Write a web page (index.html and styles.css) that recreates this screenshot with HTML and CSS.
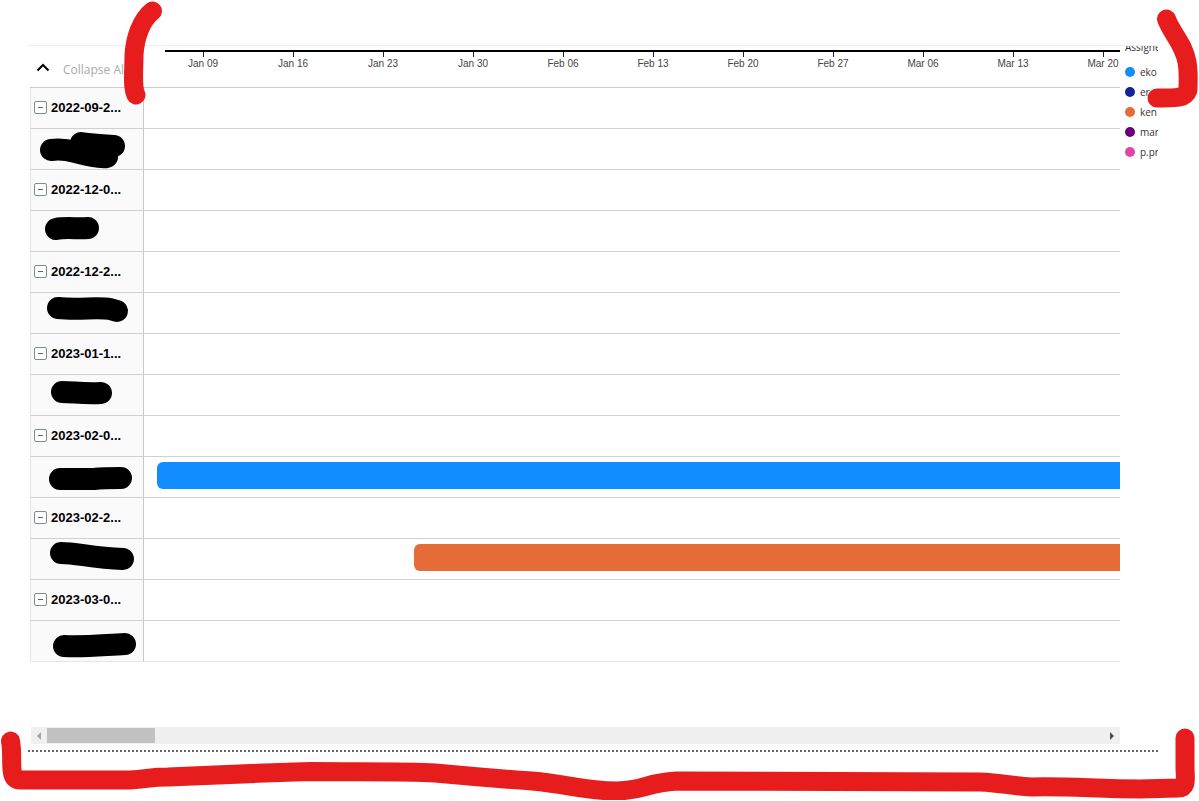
FILE: index.html
```html
<!DOCTYPE html>
<html lang="en">
    <head>
        <meta charset="utf-8">
        <title>Timeline</title>
        <link rel="stylesheet" href="styles.css">
    </head>
    <body>
        <main class="report">
            <div class="visual">
                <div class="chart">
                    <!-- Toolbar and time axis -->
                    <div class="chart-header">
                        <button class="collapse-all" type="button">
                            <svg class="chevron" viewBox="0 0 14 9"><path d="M1.5 7.5 L7 2 L12.5 7.5"/></svg>
                            <span>Collapse All</span>
                        </button>
                        <div class="axis">
                            <div class="axis-line"></div>
                            <ul class="ticks">
                                <li>Jan 09</li>
                                <li>Jan 16</li>
                                <li>Jan 23</li>
                                <li>Jan 30</li>
                                <li>Feb 06</li>
                                <li>Feb 13</li>
                                <li>Feb 20</li>
                                <li>Feb 27</li>
                                <li>Mar 06</li>
                                <li>Mar 13</li>
                                <li>Mar 20</li>
                            </ul>
                        </div>
                    </div>

                    <!-- Task rows -->
                    <table class="tasks">
                        <tr><th scope="row"><div class="group"><button class="toggle" type="button" aria-label="Collapse"></button>2022-09-2...</div></th><td></td></tr>
                        <tr><th></th><td></td></tr>
                        <tr><th scope="row"><div class="group"><button class="toggle" type="button" aria-label="Collapse"></button>2022-12-0...</div></th><td></td></tr>
                        <tr><th></th><td></td></tr>
                        <tr><th scope="row"><div class="group"><button class="toggle" type="button" aria-label="Collapse"></button>2022-12-2...</div></th><td></td></tr>
                        <tr><th></th><td></td></tr>
                        <tr><th scope="row"><div class="group"><button class="toggle" type="button" aria-label="Collapse"></button>2023-01-1...</div></th><td></td></tr>
                        <tr><th></th><td></td></tr>
                        <tr><th scope="row"><div class="group"><button class="toggle" type="button" aria-label="Collapse"></button>2023-02-0...</div></th><td></td></tr>
                        <tr><th></th><td><div class="bar bar-blue" style="margin-left: 13px"></div></td></tr>
                        <tr><th scope="row"><div class="group"><button class="toggle" type="button" aria-label="Collapse"></button>2023-02-2...</div></th><td></td></tr>
                        <tr><th></th><td><div class="bar bar-orange" style="margin-left: 270px"></div></td></tr>
                        <tr><th scope="row"><div class="group"><button class="toggle" type="button" aria-label="Collapse"></button>2023-03-0...</div></th><td></td></tr>
                        <tr><th></th><td></td></tr>
                    </table>

                    <div class="scrollbar">
                        <button class="scroll-arrow" type="button" aria-label="Scroll left"><svg viewBox="0 0 4 8"><path d="M4 0 V8 L0 4 Z" fill="#a3a3a3"/></svg></button>
                        <div class="scroll-thumb"></div>
                        <button class="scroll-arrow scroll-right" type="button" aria-label="Scroll right"><svg viewBox="0 0 4 8"><path d="M0 0 V8 L4 4 Z" fill="#505050"/></svg></button>
                    </div>
                </div>

                <div class="legend">
                    <div class="legend-title">Assigne</div>
                    <ul>
                        <li><i class="dot blue"></i>eko</li>
                        <li><i class="dot navy"></i>er</li>
                        <li><i class="dot orange"></i>ken</li>
                        <li><i class="dot purple"></i>mar</li>
                        <li><i class="dot pink"></i>p.pr</li>
                    </ul>
                </div>
            </div>
            <div class="dotted-rule"></div>
        </main>

        <!-- Pen marks over the report -->
        <svg class="marks" width="1199" height="801" viewBox="0 0 1199 801">
            <g class="pen-black">
                <path d="M51 150 C60 149 68 150 75 152 C86 155 98 158 107 157 M81 143 C92 145 103 145 114 146 M82 146 L106 155"/>
                <path d="M56 229 C66 227 78 229 88 228"/>
                <path d="M58 308 C78 310 98 307 110 309 L117 311"/>
                <path d="M62 392 C73 392 84 394 101 393"/>
                <path d="M60 479 L94 479 C103 478 112 478 121 478"/>
                <path d="M61 553 C77 553 92 558 123 559"/>
                <path d="M64 646 C86 647 103 645 125 644"/>
            </g>
            <g class="pen-red">
                <path d="M152.500 11 C141 20 135 38 134 55 C134 72 132 87 136 95"/>
                <path d="M1166.500 19 C1172 34 1184 44 1187 62 C1189 73 1188 82 1188 90 C1185 99 1174 98 1157 98"/>
                <path d="M10.500 741 C14 759 7 781 21 780 L130 780 C148 779 150 777 168 777 C212 775 263 773 310 771.500 C358 772 407 771 435 773 C477 777 502 779 532 781 C568 784 583 791 617 791 C647 790 644 783 677 781 L980 782 C1003 783 1012 786 1032 787 C1067 786 1099 789 1140 789 L1178 788 C1188 788 1185 778 1185 767 V738"/>
            </g>
        </svg>
    </body>
</html>
```

FILE: styles.css
```css
* { box-sizing: border-box; }
body { margin: 0; background: #fff; color: #000; font-family: "Liberation Sans", Arial, sans-serif; position: relative; overflow: hidden; }
ul { list-style: none; margin: 0; padding: 0; }
button { border: 0; padding: 0; background: none; font: inherit; color: inherit; }

.report { padding: 45px 41px 48px 28px; }
.visual { display: flex; border-top: 1px solid #eee; overflow: hidden; }
.chart { flex: 1; min-width: 0; padding-left: 2px; }

/* Header */
.chart-header { display: flex; height: 41px; }
.collapse-all {
    display: flex;
    align-items: center;
    flex: none;
    gap: 13px;
    width: 114px;
    padding: 5px 0 0 6px;
    font-family: "Open Sans", "Noto Sans", sans-serif;
    font-size: 12px;
    color: #aaa;
    white-space: nowrap;
}
.chevron { width: 14px; height: 9px; margin-bottom: 3px; fill: none; stroke: #000; stroke-width: 2; }
.axis { flex: 1; min-width: 0; padding-top: 4px; overflow: hidden; }
.axis-line { height: 2px; margin-left: 21px; background: #000; }
.ticks { display: flex; margin-left: 14px; font-size: 10px; line-height: 12px; color: #444; }
.ticks li { flex: none; width: 90px; text-align: center; }
.ticks li::before { content: ""; display: block; width: 1px; height: 5px; margin: 0 auto 1px; background: #222; }

/* Rows */
.tasks { width: 100%; table-layout: fixed; border-collapse: separate; border-spacing: 0; border-top: 1px solid #ccc; }
.tasks th, .tasks td { height: 41px; padding: 0; border-bottom: 1px solid #d0d0d0; }
.tasks th { width: 114px; padding-bottom: 2px; background: #fafafa; border-left: 1px solid #e6e6e6; border-right: 1px solid #c8c8c8; }
.tasks td { padding-bottom: 3px; }
.tasks tr:last-child th, .tasks tr:last-child td { border-bottom-color: #e6e6e6; }
.group { display: flex; align-items: center; gap: 4px; padding-left: 3px; font-size: 13px; font-weight: bold; white-space: nowrap; }
.toggle { display: flex; align-items: center; justify-content: center; width: 13px; height: 13px; border: 1px solid #7f8c8d; border-radius: 2px; background: #fff; }
.toggle::before { content: ""; width: 5px; height: 1px; background: #666; }
.bar { height: 27px; border-radius: 6px 0 0 6px; }
.bar-blue { background: #118dff; }
.bar-orange { background: #e66c37; }

/* Scrollbar */
.scrollbar { display: flex; align-items: center; height: 17px; margin: 65px 0 0 1px; background: #f0f0f0; }
.scroll-arrow { display: flex; align-items: center; justify-content: center; width: 16px; height: 17px; }
.scroll-arrow svg { width: 4px; height: 8px; }
.scroll-right { margin-left: auto; }
.scroll-thumb { width: 108px; height: 15px; background: #c1c1c1; }

/* Legend */
.legend { width: 38px; padding-left: 5px; overflow: hidden; font-family: "Open Sans", "Noto Sans", sans-serif; font-size: 10px; color: #333; white-space: nowrap; }
.legend-title { height: 16px; margin-top: -7px; line-height: 16px; }
.legend ul { padding-top: 7px; }
.legend li { display: flex; align-items: center; gap: 5px; height: 20px; }
.dot { flex: none; width: 10px; height: 10px; border-radius: 50%; }
.blue { background: #118dff; }
.navy { background: #12239e; }
.orange { background: #e66c37; }
.purple { background: #6b007b; }
.pink { background: #e044a7; }

.dotted-rule { height: 2px; margin-top: 6px; background: repeating-linear-gradient(to right, #666 0 2px, #fff 2px 4px); }

/* Pen marks */
.marks { position: absolute; top: 0; left: 0; pointer-events: none; }
.marks path { fill: none; stroke-linecap: round; stroke-linejoin: round; }
.pen-black path { stroke: #000; stroke-width: 22px; }
.pen-red path { stroke: #e71d1d; stroke-width: 19px; }
```
